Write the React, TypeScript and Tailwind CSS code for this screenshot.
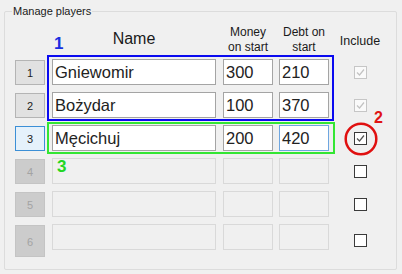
import React from "react";

type Row = {
  n: number;
  name: string;
  money: string;
  debt: string;
  enabled: boolean;
  checked: boolean;
};

const rows: Row[] = [
  { n: 1, name: "Gniewomir", money: "300", debt: "210", enabled: true, checked: true },
  { n: 2, name: "Bożydar", money: "100", debt: "370", enabled: true, checked: true },
  { n: 3, name: "Męcichuj", money: "200", debt: "420", enabled: true, checked: true },
  { n: 4, name: "", money: "", debt: "", enabled: false, checked: false },
  { n: 5, name: "", money: "", debt: "", enabled: false, checked: false },
  { n: 6, name: "", money: "", debt: "", enabled: false, checked: false },
];

function CheckBox({ row }: { row: Row }) {
  // rows 1-2 are greyed out (disabled look), row 3 is active
  const faded = row.n < 3;
  return (
    <div
      className={`w-[13px] h-[13px] border ${
        faded ? "border-[#c6c6c6] bg-[#fafafa]" : "border-[#3a3a3a] bg-white"
      }`}
    >
      {row.checked && (
        <svg width="11" height="11" viewBox="0 0 11 11" fill="none">
          <path
            d="M2 5.5 L4.5 8 L9 2.5"
            stroke={faded ? "#c2c2c2" : "#555555"}
            strokeWidth="1.2"
          />
        </svg>
      )}
    </div>
  );
}

function Field({ value, w, focus, enabled }: { value: string; w: string; focus?: boolean; enabled: boolean }) {
  return (
    <div
      className={`${w} h-[26px] border pl-[2px] pt-px leading-[23px] text-[16.5px] text-[#222222] ${
        enabled
          ? focus
            ? "bg-white border-[#6ea6e0]"
            : "bg-white border-[#a4a4a4]"
          : "bg-[#f0f0f0] border-[#d9d9d9]"
      }`}
    >
      {value}
    </div>
  );
}

export default function App() {
  return (
    <div
      className="relative w-[402px] h-[274px] bg-[#f0f0f0] overflow-hidden pt-[11px] pl-[4px]"
      style={{ fontFamily: '"Liberation Sans", Arial, sans-serif' }}
    >
      {/* Group box */}
      <div className="relative w-[393px] h-[259px] border border-[#dcdcdc] rounded-[2px]">
        <span className="absolute left-[7px] -top-[8px] px-[1px] bg-[#f0f0f0] text-[11px] leading-[14px] text-[#1a1a1a]">
          Manage players
        </span>

        <div className="pl-[10px]">
          {/* Header */}
          <div className="flex h-[47px] text-[#1a1a1a]">
            <div className="w-[30px]" />
            <div className="ml-[7px] w-[164px] text-center text-[16px] leading-[20px] mt-[17px]">Name</div>
            <div className="ml-[7px] w-[50px] text-center text-[12px] leading-[15px] mt-[13px]">
              Money<br />on start
            </div>
            <div className="ml-[6px] w-[50px] text-center text-[12px] leading-[15px] mt-[13px]">
              Debt on<br />start
            </div>
            <div className="ml-[6px] w-[50px] text-center text-[12.5px] leading-[15px] mt-[22px]">Include</div>
          </div>

          {/* Rows */}
          <div className="flex flex-col gap-[7px]">
            {rows.map((r) => (
              <div key={r.n} className={`flex items-start ${r.n === 6 ? "h-[32px]" : "h-[26px]"}`}>
                <div
                  className={`w-[30px] ${r.n === 6 ? "h-[32px]" : "h-[25px]"} mt-px border flex items-center justify-center text-[11px] pt-[2px] ${
                    r.n === 3
                      ? "bg-[#e5f1fb] border-[#3c8fd6] text-[#222]"
                      : r.enabled
                      ? "bg-[#e1e1e1] border-[#b4b4b4] text-[#222]"
                      : "bg-[#cccccc] border-[#c4c4c4] text-[#a3a3a3]"
                  }`}
                >
                  {r.n}
                </div>
                <div className="ml-[7px]">
                  <Field value={r.name} w="w-[164px]" enabled={r.enabled} />
                </div>
                <div className="ml-[7px]">
                  <Field value={r.money} w="w-[50px]" enabled={r.enabled} />
                </div>
                <div className="ml-[6px]">
                  <Field value={r.debt} w="w-[50px]" enabled={r.enabled} focus={r.n === 3} />
                </div>
                <div className={`ml-[6px] w-[50px] flex justify-center ${r.n === 6 ? "h-[32px]" : "h-[26px]"} items-center`}>
                  <CheckBox row={r} />
                </div>
              </div>
            ))}
          </div>
        </div>
      </div>

      {/* Annotations drawn over the form */}
      <div className="absolute left-[47px] top-[55px] w-[287px] h-[66px] border-2 border-[#0a0af0]" />
      <div className="absolute left-[47px] top-[122px] w-[288px] h-[32px] border-2 border-[#33e633]" />
      <span className="absolute left-[54px] top-[35px] text-[17px] leading-[17px] font-bold text-[#1a2ee0]">1</span>
      <span className="absolute left-[57px] top-[158px] text-[17px] leading-[17px] font-bold text-[#22d622]">3</span>
      <span className="absolute left-[374px] top-[110px] text-[16px] leading-[16px] font-bold text-[#e01414]">2</span>
      <svg className="absolute left-[344px] top-[122px]" width="34" height="34" viewBox="0 0 34 34" fill="none">
        <circle cx="17" cy="17" r="15.3" stroke="#e01010" strokeWidth="2.5" />
      </svg>
    </div>
  );
}
